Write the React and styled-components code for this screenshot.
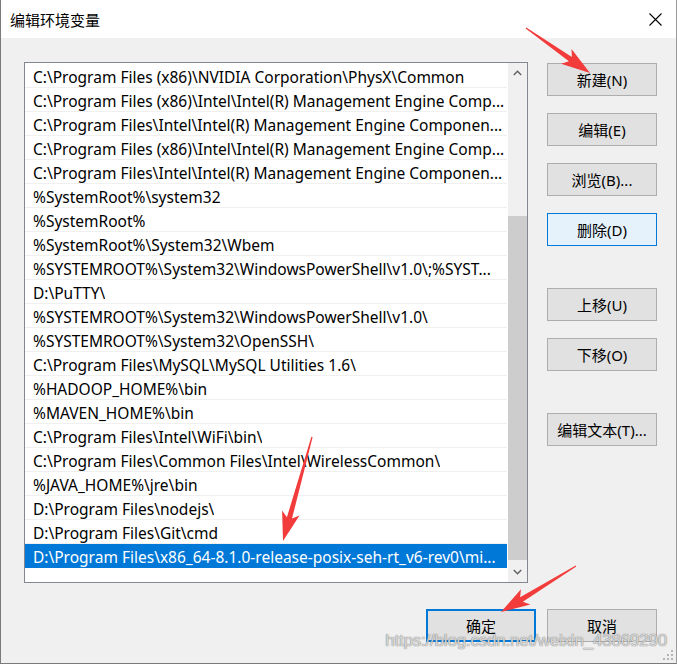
import React from 'react';
import styled, { createGlobalStyle } from 'styled-components';

const paths = [
  'C:\\Program Files (x86)\\NVIDIA Corporation\\PhysX\\Common',
  'C:\\Program Files (x86)\\Intel\\Intel(R) Management Engine Comp...',
  'C:\\Program Files\\Intel\\Intel(R) Management Engine Componen...',
  'C:\\Program Files (x86)\\Intel\\Intel(R) Management Engine Comp...',
  'C:\\Program Files\\Intel\\Intel(R) Management Engine Componen...',
  '%SystemRoot%\\system32',
  '%SystemRoot%',
  '%SystemRoot%\\System32\\Wbem',
  '%SYSTEMROOT%\\System32\\WindowsPowerShell\\v1.0\\;%SYST...',
  'D:\\PuTTY\\',
  '%SYSTEMROOT%\\System32\\WindowsPowerShell\\v1.0\\',
  '%SYSTEMROOT%\\System32\\OpenSSH\\',
  'C:\\Program Files\\MySQL\\MySQL Utilities 1.6\\',
  '%HADOOP_HOME%\\bin',
  '%MAVEN_HOME%\\bin',
  'C:\\Program Files\\Intel\\WiFi\\bin\\',
  'C:\\Program Files\\Common Files\\Intel\\WirelessCommon\\',
  '%JAVA_HOME%\\jre\\bin',
  'D:\\Program Files\\nodejs\\',
  'D:\\Program Files\\Git\\cmd',
  'D:\\Program Files\\x86_64-8.1.0-release-posix-seh-rt_v6-rev0\\mi...',
];

const sideButtons = [
  { label: '新建(N)' },
  { label: '编辑(E)' },
  { label: '浏览(B)...' },
  { label: '删除(D)', focused: true },
  { label: '上移(U)', gap: 42 },
  { label: '下移(O)' },
  { label: '编辑文本(T)...', gap: 42 },
];

// tail -> tip, in page pixels
const arrows = [
  [526, 28, 590, 73],
  [312, 437, 283, 541],
  [576, 566, 501, 612],
];

const arrowPoints = (tx, ty, px, py) => {
  const dx = px - tx;
  const dy = py - ty;
  const len = Math.hypot(dx, dy);
  const ux = dx / len;
  const uy = dy / len;
  const nx = -uy;
  const ny = ux;
  const head = 24;
  const neckX = px - ux * head;
  const neckY = py - uy * head;
  const barbX = neckX - ux * 5;
  const barbY = neckY - uy * 5;
  const pt = (x, y) => `${x.toFixed(1)},${y.toFixed(1)}`;
  return [
    pt(tx + nx * 0.6, ty + ny * 0.6),
    pt(neckX + nx * 2.6, neckY + ny * 2.6),
    pt(barbX + nx * 9, barbY + ny * 9),
    pt(px, py),
    pt(barbX - nx * 9, barbY - ny * 9),
    pt(neckX - nx * 2.6, neckY - ny * 2.6),
    pt(tx - nx * 0.6, ty - ny * 0.6),
  ].join(' ');
};

const GlobalStyle = createGlobalStyle`
  html, body {
    margin: 0;
    padding: 0;
    background: #f0f0f0;
  }
  * {
    box-sizing: border-box;
  }
`;

const Window = styled.div`
  position: relative;
  width: 677px;
  height: 664px;
  background: #f0f0f0;
  border-left: 1px solid #7a7a7a;
  border-right: 1px solid #9a9a9a;
  border-bottom: 1px solid #7a7a7a;
  font-family: 'Noto Sans', 'Noto Sans CJK SC', sans-serif;
  color: #000;
  overflow: hidden;
`;

const TitleBar = styled.div`
  height: 38px;
  background: #fff;
  display: flex;
  align-items: center;
  justify-content: space-between;
  padding: 0 14px 0 9px;
  font-size: 15px;
`;

const Title = styled.span`
  font-family: 'Noto Sans CJK SC', sans-serif;
  line-height: 1;
`;

const CloseButton = styled.div`
  width: 14px;
  height: 14px;
  display: flex;
  align-items: center;
  justify-content: center;
  margin-top: 1px;
`;

const Body = styled.div`
  padding: 24px 19px 0 23px;
`;

const Main = styled.div`
  display: flex;
  align-items: flex-start;
  gap: 19px;
`;

const ListBox = styled.div`
  width: 504px;
  height: 521px;
  background: #fff;
  border: 1px solid #828790;
  display: flex;
`;

const Rows = styled.div`
  flex: 1;
  min-width: 0;
  padding-top: 1px;
  overflow: hidden;
`;

const Row = styled.div`
  height: 24px;
  padding: 2px 1px 0 8px;
  display: flex;
  align-items: center;
  font-size: 15.5px;
  white-space: nowrap;
  overflow: hidden;
  border-bottom: 1px solid ${({ selected }) => (selected ? '#0078d7' : '#f0f0f0')};
  background: ${({ selected }) => (selected ? '#0078d7' : 'transparent')};
  color: ${({ selected }) => (selected ? '#fff' : '#000')};

  span {
    overflow: hidden;
    text-overflow: ellipsis;
  }
`;

const ScrollBar = styled.div`
  width: 19px;
  margin-left: 1px;
  background: #f0f0f0;
  display: flex;
  flex-direction: column;
`;

const ScrollArrow = styled.div`
  height: 20px;
  display: flex;
  align-items: center;
  justify-content: center;
`;

const ScrollTrack = styled.div`
  flex: 1;
  padding-top: 133px;
  padding-bottom: 2px;
  display: flex;
  flex-direction: column;
`;

const ScrollThumb = styled.div`
  flex: 1;
  background: #cdcdcd;
`;

const ButtonColumn = styled.div`
  display: flex;
  flex-direction: column;
  gap: 17px;
  padding-top: 1px;
`;

const Button = styled.div`
  width: 110px;
  height: 33px;
  margin-top: ${({ gap }) => (gap ? `${gap - 17}px` : '0')};
  display: flex;
  align-items: center;
  justify-content: center;
  font-size: 15px;
  font-family: 'Noto Sans', 'Noto Sans CJK SC', sans-serif;
  background: ${({ focused }) => (focused ? '#e5f1fb' : '#e1e1e1')};
  border: ${({ primary }) => (primary ? '2px' : '1px')} solid
    ${({ focused, primary }) => (focused || primary ? '#0078d7' : '#adadad')};
  padding-bottom: 1px;
`;

const Footer = styled.div`
  display: flex;
  justify-content: flex-end;
  gap: 11px;
  margin-top: 26px;
`;

const Overlay = styled.svg`
  position: absolute;
  left: -1px;
  top: 0;
  pointer-events: none;
`;

const Watermark = styled.div`
  position: absolute;
  right: 9px;
  bottom: 12px;
  font-family: 'Liberation Sans', Arial, sans-serif;
  font-size: 17px;
  letter-spacing: -0.2px;
  color: rgba(240, 240, 240, 0.8);
  text-shadow: 0 0 1px rgba(90, 90, 90, 0.8), 0 0 1px rgba(90, 90, 90, 0.5);
  pointer-events: none;
`;

const Grip = styled.svg`
  position: absolute;
  right: 2px;
  bottom: 2px;
`;

const App = () => {
  return (
    <>
      <GlobalStyle />
      <Window>
        <TitleBar>
          <Title>编辑环境变量</Title>
          <CloseButton>
            <svg width="13" height="13" viewBox="0 0 13 13">
              <path d="M0.5 0.5 L12.5 12.5 M12.5 0.5 L0.5 12.5" stroke="#000" strokeWidth="1.1" />
            </svg>
          </CloseButton>
        </TitleBar>
        <Body>
          <Main>
            <ListBox>
              <Rows>
                {paths.map((item, index) => (
                  <Row key={index} selected={index === paths.length - 1}>
                    <span>{item}</span>
                  </Row>
                ))}
              </Rows>
              <ScrollBar>
                <ScrollArrow>
                  <svg width="9" height="6" viewBox="0 0 9 6">
                    <polyline points="0.8,5 4.5,1.2 8.2,5" fill="none" stroke="#606060" strokeWidth="1.4" />
                  </svg>
                </ScrollArrow>
                <ScrollTrack>
                  <ScrollThumb />
                </ScrollTrack>
                <ScrollArrow>
                  <svg width="9" height="6" viewBox="0 0 9 6">
                    <polyline points="0.8,1 4.5,4.8 8.2,1" fill="none" stroke="#606060" strokeWidth="1.4" />
                  </svg>
                </ScrollArrow>
              </ScrollBar>
            </ListBox>
            <ButtonColumn>
              {sideButtons.map((item) => (
                <Button key={item.label} gap={item.gap} focused={item.focused}>
                  {item.label}
                </Button>
              ))}
            </ButtonColumn>
          </Main>
          <Footer>
            <Button primary>确定</Button>
            <Button>取消</Button>
          </Footer>
        </Body>
        <Watermark>https://blog.csdn.net/weixin_43869290</Watermark>
        <Grip width="12" height="12" viewBox="0 0 12 12">
          {[
            [10, 2], [10, 6], [6, 6], [10, 10], [6, 10], [2, 10],
          ].map(([x, y]) => (
            <rect key={`${x}-${y}`} x={x - 1} y={y - 1} width="2" height="2" fill="#b5b5b5" />
          ))}
        </Grip>
        <Overlay width="677" height="664" viewBox="0 0 677 664">
          {arrows.map((a, i) => (
            <polygon key={i} points={arrowPoints(...a)} fill="#f23b3b" />
          ))}
        </Overlay>
      </Window>
    </>
  );
};

export default App;
